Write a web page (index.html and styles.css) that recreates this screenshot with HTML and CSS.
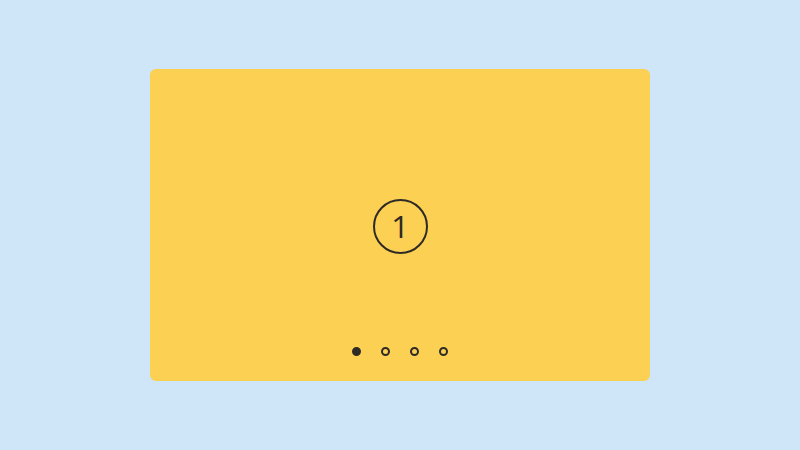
FILE: index.html
```html
<!DOCTYPE html>
<html lang="en">
<head>
<meta charset="utf-8">
<title>Carousel</title>
<link rel="stylesheet" href="styles.css">
</head>
<body>
<main class="stage">
  <section class="card">
    <div class="slide">
      <span class="badge">1</span>
    </div>
    <div class="dots">
      <span class="dot active"></span>
      <span class="dot"></span>
      <span class="dot"></span>
      <span class="dot"></span>
    </div>
  </section>
</main>
</body>
</html>
```
FILE: styles.css
```css
html, body {
  margin: 0;
  padding: 0;
}
body {
  background: #cfe5f8;
  font-family: "Open Sans", "Liberation Sans", sans-serif;
}
.stage {
  width: 800px;
  height: 450px;
  display: flex;
  align-items: center;
  justify-content: center;
}
.card {
  width: 500px;
  height: 312px;
  background: #fcd052;
  border-radius: 6px;
  display: grid;
}
.slide, .dots {
  grid-area: 1 / 1;
}
.slide {
  display: flex;
  align-items: center;
  justify-content: center;
  padding-top: 2px;
}
.badge {
  width: 51px;
  height: 51px;
  border: 2px solid #2e2a26;
  border-radius: 50%;
  display: flex;
  align-items: center;
  justify-content: center;
  font-size: 31px;
  font-weight: 400;
  color: #2e2a26;
  line-height: 1;
}
.dots {
  align-self: end;
  justify-self: center;
  display: flex;
  gap: 20px;
  padding-bottom: 25px;
}
.dot {
  width: 9px;
  height: 9px;
  box-sizing: border-box;
  border: 2px solid #2e2a26;
  border-radius: 50%;
}
.dot.active {
  background: #2e2a26;
}
```
